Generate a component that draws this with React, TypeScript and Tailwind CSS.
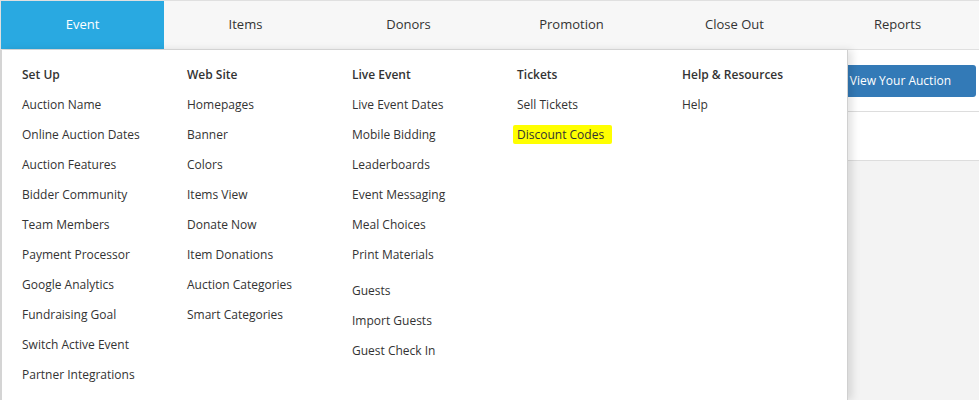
import React from "react";

const tabs = ["Event", "Items", "Donors", "Promotion", "Close Out", "Reports"];

type Link = { label: string; gapBefore?: boolean; marked?: boolean };
type Column = { title: string; links: Link[] };

const columns: Column[] = [
  {
    title: "Set Up",
    links: [
      { label: "Auction Name" },
      { label: "Online Auction Dates" },
      { label: "Auction Features" },
      { label: "Bidder Community" },
      { label: "Team Members" },
      { label: "Payment Processor" },
      { label: "Google Analytics" },
      { label: "Fundraising Goal" },
      { label: "Switch Active Event" },
      { label: "Partner Integrations" },
    ],
  },
  {
    title: "Web Site",
    links: [
      { label: "Homepages" },
      { label: "Banner" },
      { label: "Colors" },
      { label: "Items View" },
      { label: "Donate Now" },
      { label: "Item Donations" },
      { label: "Auction Categories" },
      { label: "Smart Categories" },
    ],
  },
  {
    title: "Live Event",
    links: [
      { label: "Live Event Dates" },
      { label: "Mobile Bidding" },
      { label: "Leaderboards" },
      { label: "Event Messaging" },
      { label: "Meal Choices" },
      { label: "Print Materials" },
      { label: "Guests", gapBefore: true },
      { label: "Import Guests" },
      { label: "Guest Check In" },
    ],
  },
  {
    title: "Tickets",
    links: [{ label: "Sell Tickets" }, { label: "Discount Codes", marked: true }],
  },
  {
    title: "Help & Resources",
    links: [{ label: "Help" }],
  },
];

export default function App() {
  return (
    <div
      className="relative h-[400px] w-[979px] overflow-hidden bg-white text-[#333]"
      style={{ fontFamily: '"Open Sans", "Liberation Sans", sans-serif' }}
    >
      {/* top navigation */}
      <div className="flex h-[50px] border-t border-b border-l border-[#e0e0e0] bg-[#f7f7f7]">
        {tabs.map((t, i) => (
          <div
            key={t}
            className={
              i === 0
                ? "flex flex-1 items-center justify-center bg-[#29a9e1] pb-[1px] text-[13px] text-white"
                : "flex flex-1 items-center justify-center pb-[1px] text-[13px] text-[#333]"
            }
          >
            {t}
          </div>
        ))}
      </div>

      {/* page underneath the menu */}
      <div className="flex h-[350px] flex-col">
        <div className="flex h-[62px] justify-end border-b border-[#dddddd] bg-white pt-[15px] pr-[3px]">
          <div className="flex h-[32px] w-[170px] items-center justify-end rounded-[3px] bg-[#337ab7] pr-[25px] text-[12px] text-white">
            View Your Auction
          </div>
        </div>
        <div className="h-[49px] border-b border-[#dddddd] bg-white" />
        <div className="flex-1 bg-[#f3f3f3]" />
      </div>

      {/* mega menu dropdown */}
      <div className="absolute top-[50px] left-0 bottom-0 flex w-[848px] border-l-2 border-r border-l-[#d4d4d4] border-r-[#d0d0d0] bg-white pt-[10px] pl-[20px] shadow-[4px_0_8px_rgba(0,0,0,0.12)]">
        {columns.map((col) => (
          <div key={col.title} className="flex w-[165px] flex-col">
            <div className="h-[30px] text-[12px] leading-[29px] font-semibold text-[#333]">
              {col.title}
            </div>
            {col.links.map((l) => (
              <div
                key={l.label}
                className={
                  l.gapBefore
                    ? "mt-[6px] h-[30px] text-[12px] leading-[30px] text-[#333]"
                    : "h-[30px] text-[12px] leading-[30px] text-[#333]"
                }
              >
                {l.marked ? (
                  <span className="relative inline-block">
                    <span className="absolute top-[5px] -left-[4px] h-[19px] w-[99px] rounded-[2px] bg-[#ffff00]" />
                    <span className="relative">{l.label}</span>
                  </span>
                ) : (
                  l.label
                )}
              </div>
            ))}
          </div>
        ))}
      </div>
    </div>
  );
}
